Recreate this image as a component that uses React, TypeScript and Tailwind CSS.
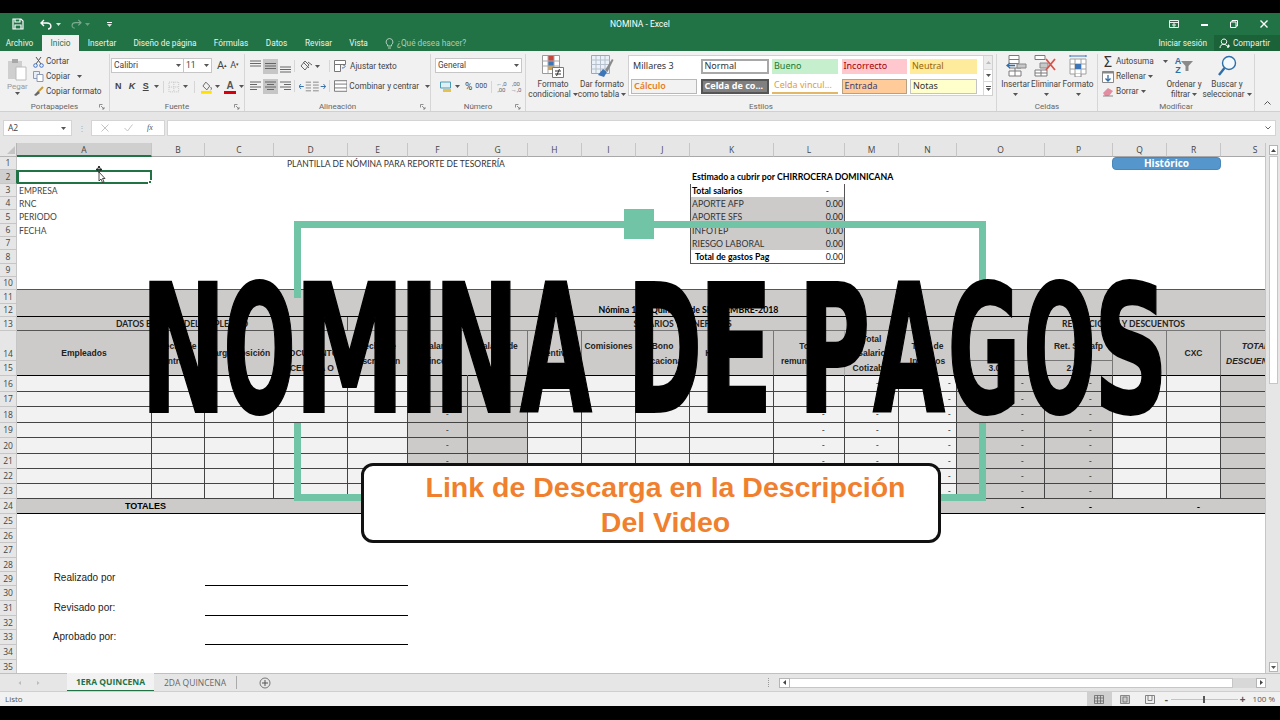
import type { ReactNode } from 'react';

const UI = "font-['Open_Sans',sans-serif]";
const RIB = "font-['Roboto',sans-serif]";
const CELL = "font-['Lato',sans-serif]";
const HEAD = "font-['Liberation_Sans',sans-serif]";

const COLS = ['A','B','C','D','E','F','G','H','I','J','K','L','M','N','O','P','Q','R','S'];
const COL_W = ['w-[135px]','w-[53px]','w-[69px]','w-[74px]','w-[60px]','w-[60px]','w-[60px]','w-[54px]','w-[54px]','w-[54px]','w-[84px]','w-[71px]','w-[54px]','w-[58px]','w-[88px]','w-[68px]','w-[54px]','w-[54px]','w-[69px]'];

const GREY = 'bg-[#cdcbca]';
const SOFT = 'bg-[#f2f2f2]';

// each letter of the thumbnail title: box width + gap, then horizontal squeeze
const TITLE: [string, string, string][] = [
  ['N', 'w-[67px]', 'scale-x-[0.576]'],
  ['O', 'w-[64px] ml-[11px]', 'scale-x-[0.48]'],
  ['M', 'w-[90px] ml-[13px]', 'scale-x-[0.63]'],
  ['I', 'w-[22px] ml-[13px]', 'scale-x-[0.65]'],
  ['N', 'w-[67px] ml-[13px]', 'scale-x-[0.576]'],
  ['A', 'w-[72px] ml-[10px]', 'scale-x-[0.525]'],
  ['D', 'w-[65px] ml-[40px]', 'scale-x-[0.505]'],
  ['E', 'w-[58px] ml-[10px]', 'scale-x-[0.62]'],
  ['P', 'w-[57px] ml-[41px]', 'scale-x-[0.555]'],
  ['A', 'w-[72px] ml-[10px]', 'scale-x-[0.525]'],
  ['G', 'w-[63px] ml-[8px]', 'scale-x-[0.5]'],
  ['O', 'w-[65px] ml-[11px]', 'scale-x-[0.48]'],
  ['S', 'w-[63px] ml-[8px]', 'scale-x-[0.585]'],
];

function Caret({ light }: { light?: boolean }) {
  return (
    <svg width="5" height="3" viewBox="0 0 5 3" className="shrink-0">
      <path d="M0 0h5L2.5 3z" fill={light ? '#d7e6dc' : '#555'} />
    </svg>
  );
}

function Launcher() {
  return (
    <svg width="6" height="6" viewBox="0 0 6 6" className="absolute right-[4px] top-[3px]">
      <path d="M.5 .5h3M.5 .5v3M2 2l3 3M5 3v2H3" stroke="#777" strokeWidth=".8" fill="none" />
    </svg>
  );
}

function Group({ w, label, launcher, children }: { w: string; label: string; launcher?: boolean; children: ReactNode }) {
  return (
    <div className={`${w} h-[57px] mt-[3px] border-r border-[#d6d6d6] flex flex-col shrink-0`}>
      <div className="h-[47px] flex">{children}</div>
      <div className="relative h-[10px] leading-[12px] text-center text-[8px] text-[#666]">
        {label}
        {launcher && <Launcher />}
      </div>
    </div>
  );
}

function Lines({ kind, active }: { kind: 'top' | 'mid' | 'bot' | 'left' | 'center' | 'right'; active?: boolean }) {
  const rows: Record<string, string> = {
    top: 'M2 2h11M2 4.5h11M2 7h11',
    mid: 'M2 4.5h11M2 7h11M2 9.5h11',
    bot: 'M2 8h11M2 10.5h11M2 13h11',
    left: 'M2 3h11M2 5.5h7M2 8h11M2 10.5h7',
    center: 'M2 3h11M4 5.5h7M2 8h11M4 10.5h7',
    right: 'M2 3h11M6 5.5h7M2 8h11M6 10.5h7',
  };
  return (
    <span className={`w-[15px] h-[15px] ${active ? 'bg-[#c6c6c6]' : ''}`}>
      <svg width="15" height="15" viewBox="0 0 15 15">
        <path d={rows[kind]} stroke="#666" strokeWidth="1" fill="none" />
      </svg>
    </span>
  );
}

function GalleryCell({ className, children }: { className: string; children: ReactNode }) {
  return <div className={`h-[15px] pl-[2px] text-[9px] overflow-hidden whitespace-nowrap ${className}`}>{children}</div>;
}

function BigButton({ w, icon, line1, line2 }: { w: string; icon: ReactNode; line1: string; line2: string }) {
  return (
    <div className={`${w} flex flex-col items-center text-[8.25px] leading-[10px] text-[#444] shrink-0`}>
      <div className="h-[24px] flex items-center justify-center">{icon}</div>
      <div className="mt-[1px] whitespace-nowrap">{line1}</div>
      <div className="flex items-center gap-[2px] whitespace-nowrap">{line2}<Caret /></div>
    </div>
  );
}

function CellsButton({ w, icon, label }: { w: string; icon: ReactNode; label: string }) {
  return (
    <div className={`${w} flex flex-col items-center text-[8.25px] leading-[10px] text-[#444] shrink-0`}>
      <div className="h-[24px] flex items-center justify-center">{icon}</div>
      <div className="mt-[1px]">{label}</div>
      <div className="h-[10px] flex items-center"><Caret /></div>
    </div>
  );
}

function TitleBar() {
  return (
    <div className="relative h-[22px] bg-[#217346] flex items-center text-white shrink-0">
      <svg width="12" height="12" viewBox="0 0 12 12" className="ml-[12px]">
        <path d="M1 1h8l2 2v8H1z M3 1v3h5V1 M3 11V7h6v4" stroke="#fff" strokeWidth="1.2" fill="none" />
      </svg>
      <svg width="12" height="11" viewBox="0 0 12 11" className="ml-[16px]">
        <path d="M4 1 1 4l3 3M1 4h6c5 0 5 6 1 6" stroke="#fff" strokeWidth="1.4" fill="none" />
      </svg>
      <span className="ml-[4px]"><Caret light /></span>
      <svg width="11" height="10" viewBox="0 0 12 11" className="ml-[10px] opacity-40">
        <path d="M8 1l3 3-3 3M11 4H5c-5 0-5 6-1 6" stroke="#fff" strokeWidth="1.2" fill="none" />
      </svg>
      <span className="ml-[3px] opacity-40"><Caret light /></span>
      <span className="ml-[17px] flex flex-col items-center gap-[1px]">
        <span className="w-[5px] h-[1px] bg-white" />
        <Caret light />
      </span>
      <div className={`absolute left-[610px] top-[5px] text-[8.5px] leading-[12px] ${RIB}`}>NOMINA - Excel</div>
      <div className="ml-auto flex items-center">
        <svg width="10" height="8" viewBox="0 0 10 8" className="mr-[22px]">
          <path d="M.5 .5h9v7h-9zM.5 2.5h9M5 3v4M3 5h4" stroke="#fff" strokeWidth=".9" fill="none" />
        </svg>
        <span className="w-[7px] h-[1.5px] bg-white mr-[22px] mt-[2px]" />
        <svg width="8" height="8" viewBox="0 0 8 8" className="mr-[22px]">
          <path d="M2 2V.5h5.5V6H6M.5 2H6v5.5H.5z" stroke="#fff" strokeWidth="1" fill="none" />
        </svg>
        <svg width="8" height="8" viewBox="0 0 8 8" className="mr-[12px]">
          <path d="M.5 .5l7 7M7.5 .5l-7 7" stroke="#fff" strokeWidth="1.4" />
        </svg>
      </div>
    </div>
  );
}

function Tabs() {
  const tabs: [string, string][] = [
    ['w-[46px]', 'Insertar'],
    ['w-[80px]', 'Diseño de página'],
    ['w-[52px]', 'Fórmulas'],
    ['w-[39px]', 'Datos'],
    ['w-[45px]', 'Revisar'],
    ['w-[35px]', 'Vista'],
  ];
  return (
    <div className={`h-[16px] bg-[#217346] flex items-center text-[8.25px] text-[#eaf3ed] shrink-0 ${RIB}`}>
      <div className="w-[39px] text-center">Archivo</div>
      <div className="ml-[3px] w-[37px] h-[16px] leading-[16px] bg-[#f1f1f1] text-center text-[#217346]">Inicio</div>
      {tabs.map(([w, t]) => (
        <div key={t} className={`${w} text-center`}>{t}</div>
      ))}
      <svg width="9" height="11" viewBox="0 0 9 11" className="ml-[9px]">
        <path d="M4.5 .5a3.5 3.5 0 0 0-2 6.3V8h4V6.800a3.500 3.500 0 0 0-2-6.300zM3 10h3" stroke="#bcd6c6" strokeWidth=".9" fill="none" />
      </svg>
      <div className="ml-[3px] text-[8.25px] text-[#a9cdb7]">¿Qué desea hacer?</div>
      <div className="ml-auto">Iniciar sesión</div>
      <div className="ml-[7px] w-[66px] h-[16px] bg-[#1b6239] flex items-center pl-[5px] gap-[3px]">
        <svg width="11" height="11" viewBox="0 0 11 11">
          <path d="M5 1a2.700 2.700 0 1 0 .01 0M1 10c0-5 7-5 8 0M8 8h3M9.500 6.500v3" stroke="#fff" strokeWidth="1" fill="none" />
        </svg>
        <span>Compartir</span>
      </div>
    </div>
  );
}

function Ribbon() {
  return (
    <div className={`h-[61px] bg-[#f1f1f1] border-b border-[#d0d0d0] flex text-[#444] shrink-0 ${RIB}`}>
      <Group w="w-[110px]" label="Portapapeles" launcher>
        <div className="w-[33px] pl-[7px] flex flex-col items-start text-[8px] text-[#999]">
          <svg width="20" height="24" viewBox="0 0 20 24" className="mt-[3px]">
            <path d="M1 4h14v18H1z" fill="#cfcfcf" />
            <path d="M5 2h6v4H5z" fill="#a8a8a8" />
            <path d="M9 10h10v13H9z" fill="#fff" stroke="#bbb" />
          </svg>
          <div className="mt-[1px] leading-[10px]">Pegar</div>
          <span className="ml-[8px]"><Caret /></span>
        </div>
        <div className="flex flex-col text-[8.25px]">
          <div className="h-[15px] flex items-center gap-[2px]">
            <svg width="11" height="12" viewBox="0 0 11 12"><path d="M3 1l5 7M8 1L3 8" stroke="#555" fill="none" /><circle cx="2.500" cy="9.500" r="1.800" stroke="#4472c4" fill="none" /><circle cx="8.500" cy="9.500" r="1.800" stroke="#4472c4" fill="none" /></svg>
            Cortar
          </div>
          <div className="h-[15px] flex items-center gap-[2px]">
            <svg width="11" height="11" viewBox="0 0 11 11"><path d="M.5 .5h6v7h-6z" fill="#e8eef8" stroke="#8a9ab5" /><path d="M4 3.500h6v7H4z" fill="#fff" stroke="#8a9ab5" /></svg>
            Copiar <span className="ml-[5px]"><Caret /></span>
          </div>
          <div className="h-[15px] flex items-center gap-[2px] whitespace-nowrap">
            <svg width="11" height="11" viewBox="0 0 11 11"><path d="M5 6l5-5" stroke="#c89a3c" strokeWidth="2" /><path d="M1 9l4-4 2 2-4 3z" fill="#666" /></svg>
            Copiar formato
          </div>
        </div>
      </Group>

      <Group w="w-[135px]" label="Fuente" launcher>
        <div className="mt-[4px] w-full">
          <div className="flex items-center">
            <div className="ml-[1px] w-[73px] h-[15px] bg-white border border-[#c6c6c6] flex items-center justify-between px-[2px] text-[8.5px]">Calibri<Caret /></div>
            <div className="w-[28px] h-[15px] bg-white border border-l-0 border-[#c6c6c6] flex items-center justify-between px-[2px] text-[8.5px]">11<Caret /></div>
            <span className="ml-[5px] text-[11px] leading-none">A<sup className="text-[5px]">▴</sup></span>
            <span className="ml-[3px] text-[9px] leading-none">A<sup className="text-[5px]">▾</sup></span>
          </div>
          <div className="mt-[6px] h-[15px] flex items-center pl-[3px] text-[9px]">
            <b className={`w-[11px] text-center ${HEAD}`}>N</b>
            <i className={`ml-[3px] w-[11px] text-center font-bold ${HEAD}`}>K</i>
            <span className={`ml-[3px] w-[11px] text-center font-bold underline ${HEAD}`}>S</span>
            <span className="ml-[3px]"><Caret /></span>
            <span className="ml-[4px] w-px h-[12px] bg-[#d6d6d6]" />
            <svg width="12" height="12" viewBox="0 0 12 12" className="ml-[4px]"><path d="M1 1h10v10H1zM6 1v10M1 6h10" stroke="#c4c4c4" strokeDasharray="1 1" fill="none" /></svg>
            <span className="ml-[3px]"><Caret /></span>
            <span className="ml-[6px] w-px h-[12px] bg-[#d6d6d6]" />
            <svg width="13" height="14" viewBox="0 0 13 14" className="ml-[5px]"><path d="M3 6l3-4 4 4-3 4z" fill="none" stroke="#666" /><path d="M11 7c1 1.500 1 2.500 0 3" stroke="#666" fill="none" /><path d="M1 11h11v3H1z" fill="#ffe100" /></svg>
            <span className="ml-[3px]"><Caret /></span>
            <span className="ml-[4px] relative w-[12px] h-[14px] text-center">
              <span className={`text-[10px] leading-[11px] font-bold block text-[#555] ${HEAD}`}>A</span>
              <span className="absolute left-0 bottom-0 w-[12px] h-[3px] bg-[#d8000c]" />
            </span>
            <span className="ml-[3px]"><Caret /></span>
          </div>
        </div>
      </Group>

      <Group w="w-[186px]" label="Alineación" launcher>
        <div className="mt-[4px] pl-[3px] w-full">
          <div className="h-[16px] flex items-center">
            <Lines kind="top" /><Lines kind="mid" active /><Lines kind="bot" />
            <span className="ml-[1px] w-px h-[12px] bg-[#d6d6d6]" />
            <svg width="14" height="12" viewBox="0 0 14 12" className="ml-[4px]"><path d="M2 6l4-5 4 4-4 5zM4 2l6 6M9 2l4 3" stroke="#666" fill="none" /></svg>
            <span className="ml-[2px]"><Caret /></span>
            <span className="ml-[9px] w-px h-[12px] bg-[#d6d6d6]" />
            <svg width="14" height="12" viewBox="0 0 14 12" className="ml-[4px]"><path d="M.5 .5h11v4H.5zM.5 4.500h6v7h-6z" fill="#fff" stroke="#777" /><path d="M8 8c4 0 4-3 1-3" stroke="#4472c4" fill="none" /></svg>
            <span className="ml-[2px] text-[8.25px] whitespace-nowrap">Ajustar texto</span>
          </div>
          <div className="mt-[4px] h-[16px] flex items-center">
            <Lines kind="left" /><Lines kind="center" active /><Lines kind="right" />
            <span className="ml-[1px] w-px h-[12px] bg-[#d6d6d6]" />
            <svg width="13" height="11" viewBox="0 0 13 11" className="ml-[4px]"><path d="M7 1h6M7 4h6M7 7h6M7 10h6" stroke="#888" /><path d="M5 5.500H0M2 3 0 5.500 2 8" stroke="#2f6ea8" fill="none" /></svg>
            <svg width="13" height="11" viewBox="0 0 13 11" className="ml-[2px]"><path d="M0 1h6M0 4h6M0 7h6M0 10h6" stroke="#888" /><path d="M8 5.500h5M11 3l2 2.500L11 8" stroke="#2f6ea8" fill="none" /></svg>
            <span className="ml-[3px] w-px h-[12px] bg-[#d6d6d6]" />
            <svg width="14" height="12" viewBox="0 0 14 12" className="ml-[4px]"><path d="M.5 .5h13v11H.5zM.5 4h13M.5 8h13" stroke="#777" fill="#fff" /></svg>
            <span className="ml-[2px] text-[8.25px] whitespace-nowrap">Combinar y centrar</span>
            <span className="ml-[6px]"><Caret /></span>
          </div>
        </div>
      </Group>

      <Group w="w-[95px]" label="Número" launcher>
        <div className="mt-[4px] pl-[4px] w-full">
          <div className="w-[87px] h-[15px] bg-white border border-[#c6c6c6] flex items-center justify-between px-[2px] text-[8.25px]">General<Caret /></div>
          <div className="mt-[6px] h-[15px] flex items-center text-[8.5px]">
            <svg width="13" height="12" viewBox="0 0 13 12" className="ml-[5px]"><path d="M.5 1h10v6H.5z" fill="#dff0f5" stroke="#4a9ab5" /><path d="M3 8h8v3H3z" fill="#e6c24a" /></svg>
            <span className="ml-[2px]"><Caret /></span>
            <span className="ml-[5px] text-[10px]">%</span>
            <span className="ml-[3px] text-[7px]">000</span>
            <span className="ml-[4px] w-px h-[12px] bg-[#d6d6d6]" />
            <span className="ml-[4px] text-[6px] leading-[6px] text-center text-[#667]">←,0<br />,00</span>
            <span className="ml-[4px] text-[6px] leading-[6px] text-center text-[#667]">,00<br />→,0</span>
          </div>
        </div>
      </Group>

      <Group w="w-[471px]" label="Estilos">
        <BigButton
          w="w-[52px] ml-[1px]"
          line1="Formato"
          line2="condicional"
          icon={
            <svg width="22" height="23" viewBox="0 0 22 23">
              <path d="M.5 .5h17v18H.5z" fill="#fff" stroke="#9a9a9a" />
              <path d="M6 1h6v5H6z" fill="#c9463d" />
              <path d="M6 6h6v5H6z" fill="#3d76b8" />
              <path d="M6 11h6v4H6z" fill="#d8a13c" />
              <path d="M.5 6h17M.5 11h17M6 1v17M12 1v17" stroke="#a8a8a8" fill="none" />
              <path d="M10.500 12.500h11v10h-11z" fill="#fff" stroke="#777" />
              <path d="M13 16h6M13 19h6M17.500 14l-3 7" stroke="#333" />
            </svg>
          }
        />
        <BigButton
          w="w-[46px]"
          line1="Dar formato"
          line2="como tabla"
          icon={
            <svg width="23" height="23" viewBox="0 0 23 23">
              <path d="M.5 .5h18v18H.5z" fill="#eaf1f8" stroke="#9aa8b8" />
              <path d="M.5 5h18M.5 9.500h18M.5 14h18M5 1v17M9.500 1v17M14 1v17" stroke="#b5c0cc" fill="none" />
              <path d="M7 20l5-6 4 3-3 5z" fill="#3d76b8" />
              <path d="M14 15l7-11 1.500 1-6 12z" fill="#8a8a8a" />
            </svg>
          }
        />
        <div className="ml-[3px] mt-[1px] w-[365px] h-[41px] bg-white border border-[#d0d0d0] flex text-[#333]">
          <div className="ml-[2px] mt-[3px] grid grid-cols-[66px_68px_66px_65px_67px] gap-x-[3.500px] gap-y-[3px] font-['Noto_Sans',sans-serif]">
            <GalleryCell className="bg-white leading-[13px]">Millares 3</GalleryCell>
            <GalleryCell className="bg-white border-2 border-[#a8a8a8] leading-[10px]">Normal</GalleryCell>
            <GalleryCell className="bg-[#c6efce] text-[#1d7a30] leading-[13px]">Bueno</GalleryCell>
            <GalleryCell className="bg-[#ffc7ce] text-[#9c0006] leading-[13px]">Incorrecto</GalleryCell>
            <GalleryCell className="bg-[#ffeb9c] text-[#9c6500] leading-[13px]">Neutral</GalleryCell>
            <GalleryCell className="bg-[#f2f2f2] border border-[#b8b8b8] text-[#e87d1e] font-semibold leading-[11px]">Cálculo</GalleryCell>
            <GalleryCell className="bg-[#808080] border-2 border-[#555] text-white font-bold leading-[10px]">Celda de co...</GalleryCell>
            <GalleryCell className="border-b-2 border-[#e2b868] text-[#e59a3c] leading-[12px]">Celda vincul...</GalleryCell>
            <GalleryCell className="bg-[#ffcc99] border border-[#b8a080] text-[#3f3f76] leading-[11px]">Entrada</GalleryCell>
            <GalleryCell className="bg-[#ffffcc] border border-[#c4c4c4] leading-[11px]">Notas</GalleryCell>
          </div>
          <div className="ml-auto w-[9px] flex flex-col border-l border-[#d8d8d8]">
            <div className="h-[13px] flex items-center justify-center bg-[#ececec]"><svg width="5" height="3" viewBox="0 0 5 3"><path d="M0 3h5L2.500 0z" fill="#bbb" /></svg></div>
            <div className="h-[13px] flex items-center justify-center border-y border-[#d8d8d8]"><Caret /></div>
            <div className="h-[13px] flex flex-col items-center justify-center gap-[1px]"><span className="w-[5px] h-px bg-[#555]" /><Caret /></div>
          </div>
        </div>
      </Group>

      <Group w="w-[101px]" label="Celdas">
        <span className="ml-[4px]" />
        <CellsButton
          w="w-[29px]"
          label="Insertar"
          icon={
            <svg width="24" height="22" viewBox="0 0 24 22">
              <path d="M5 .5h10v4H5zM5 4.500h10v4H5zM5 16h12v5H5zM5 13h12M11 13v8" stroke="#7a7a7a" fill="#fff" />
              <path d="M13 9h9v4h-9z" fill="#c8c8c8" stroke="#888" />
              <path d="M11 10.500H3M6 8l-3 2.500L6 13" stroke="#2f6ea8" strokeWidth="1.300" fill="none" />
            </svg>
          }
        />
        <CellsButton
          w="w-[32px]"
          label="Eliminar"
          icon={
            <svg width="24" height="22" viewBox="0 0 24 22">
              <path d="M1 .5h10v4H1zM1 15h12v6H1zM1 18h12M7 15v6" stroke="#7a7a7a" fill="#fff" />
              <path d="M6 8h8v5H6z" fill="#c8c8c8" stroke="#888" />
              <path d="M12 4l9 11M21 4l-9 11" stroke="#d9534a" strokeWidth="1.800" />
            </svg>
          }
        />
        <CellsButton
          w="w-[32px]"
          label="Formato"
          icon={
            <svg width="22" height="22" viewBox="0 0 22 22">
              <path d="M3 4h16v15H3zM3 9h16M3 14h16M8 4v15M14 4v15" stroke="#a0a0a0" fill="#fff" />
              <path d="M8 9h6v5H8z" fill="#3d76b8" />
              <path d="M3 1h16M3 0v2M19 0v2" stroke="#3d76b8" />
              <path d="M8 19v3h6v-3" stroke="#888" fill="#fff" />
            </svg>
          }
        />
      </Group>

      <Group w="w-[157px]" label="Modificar">
        <div className="w-[66px] pl-[4px] flex flex-col text-[8.25px] shrink-0">
          <div className="h-[15px] flex items-center gap-[2px]">
            <span className="w-[12px] shrink-0 text-[14px] leading-none text-[#333] text-center">Σ</span>Autosuma<span className="ml-[7px]"><Caret /></span>
          </div>
          <div className="h-[15px] flex items-center gap-[2px]">
            <svg width="12" height="12" viewBox="0 0 12 12" className="shrink-0"><path d="M.5 .5h11v11H.5z" fill="#fff" stroke="#888" /><path d="M.5 .5h11v2H.5z" fill="#888" /><path d="M6 4v6M3.500 7.500 6 10l2.500-2.500" stroke="#2f6ea8" strokeWidth="1.300" fill="none" /></svg>
            Rellenar<Caret />
          </div>
          <div className="h-[15px] flex items-center gap-[2px]">
            <svg width="12" height="11" viewBox="0 0 12 11" className="shrink-0"><path d="M1 7l5-5 5 3-4 5H3z" fill="#e08ea0" /><path d="M1 10h10" stroke="#888" /></svg>
            Borrar<Caret />
          </div>
        </div>
        <BigButton
          w="w-[40px]"
          line1="Ordenar y"
          line2="filtrar"
          icon={
            <span className="flex items-center">
              <span className={`text-[9px] leading-[9px] text-[#2f6ea8] font-bold text-center ${HEAD}`}>A<br />Z</span>
              <svg width="12" height="12" viewBox="0 0 12 12"><path d="M0 1h12L7.500 6v5h-3V6z" fill="#8a8a8a" /></svg>
            </span>
          }
        />
        <BigButton
          w="w-[46px]"
          line1="Buscar y"
          line2="seleccionar"
          icon={
            <svg width="20" height="22" viewBox="0 0 20 22">
              <circle cx="12" cy="8" r="6.500" fill="#f4f9fd" stroke="#2f6ea8" strokeWidth="1.400" />
              <path d="M7.500 13 2 20" stroke="#2f6ea8" strokeWidth="2.400" />
            </svg>
          }
        />
      </Group>
      <div className="flex-1 flex items-end justify-center pb-[6px]">
        <svg width="7" height="4" viewBox="0 0 7 4"><path d="M.5 3.500 3.500 .5l3 3" stroke="#555" fill="none" /></svg>
      </div>
    </div>
  );
}

function FormulaBar() {
  return (
    <div className={`h-[31px] bg-[#e6e6e6] flex items-center pl-[3px] pr-[4px] pt-[1px] shrink-0 ${UI}`}>
      <div className="w-[69px] h-[16px] bg-white border border-[#d4d4d4] flex items-center justify-between pl-[4px] pr-[5px] text-[8.500px] text-[#444]">A2<Caret /></div>
      <div className="w-[19px] text-center text-[8px] leading-[4px] text-[#aaa] tracking-tight">⋮</div>
      <div className="w-[74px] h-[16px] bg-white border border-[#d4d4d4] flex items-center text-[#bbb]">
        <svg width="8" height="8" viewBox="0 0 8 8" className="ml-[9px]"><path d="M.5 .5l7 7M7.500 .5l-7 7" stroke="#c4c4c4" /></svg>
        <svg width="9" height="8" viewBox="0 0 9 8" className="ml-[15px]"><path d="M.5 4l3 3 5-6.500" stroke="#c4c4c4" fill="none" /></svg>
        <i className="ml-[14px] text-[8px] text-[#555] font-['Liberation_Serif',serif]">fx</i>
      </div>
      <div className="ml-[2px] flex-1 h-[16px] bg-white border border-[#d4d4d4] flex items-center justify-end pr-[4px]">
        <svg width="6" height="4" viewBox="0 0 6 4"><path d="M.5 .5l2.500 2.500L5.500 .5" stroke="#666" fill="none" /></svg>
      </div>
    </div>
  );
}

function RowNo({ n, selected, bottom }: { n: number; selected?: boolean; bottom?: boolean }) {
  return (
    <td className={`p-0 text-center ${bottom ? 'align-bottom' : 'align-middle'} text-[8.500px] leading-[12px] border-b border-r border-[#c6c6c6] text-[#444] ${UI} ${selected ? 'bg-[#cfcfcf] border-r-[#217346]' : 'bg-[#e6e6e6]'}`}>
      {n}
    </td>
  );
}

function Hdr({ className, colSpan, rowSpan, children }: { className?: string; colSpan?: number; rowSpan?: number; children?: ReactNode }) {
  return (
    <td colSpan={colSpan} rowSpan={rowSpan} className={`p-0 pt-[1px] text-center align-middle whitespace-nowrap overflow-hidden text-[8.500px] leading-[14.25px] font-bold text-[#222] ${GREY} border-r border-b border-[#777] ${HEAD} ${className ?? ''}`}>
      {children}
    </td>
  );
}

function KV({ label, value, shaded, bold, indent, last }: { label: string; value: string; shaded?: boolean; bold?: boolean; indent?: boolean; last?: boolean }) {
  return (
    <>
      <td className={`p-0 pt-[1px] text-[8.75px] leading-none whitespace-nowrap border-l border-[#555] ${shaded ? GREY : 'bg-white'} ${bold ? 'font-bold text-black' : 'text-[#333]'} ${indent ? 'pl-[4px]' : 'pl-[1px]'} ${last ? 'border-b' : ''}`}>
        {label}
      </td>
      <td className={`p-0 pt-[1px] text-[8.75px] leading-none text-right pr-[1px] border-r border-[#555] text-[#222] ${shaded ? GREY : 'bg-white'} ${last ? 'border-b' : ''}`}>
        {value === '-' ? <span className="pr-[14px]">-</span> : value}
      </td>
    </>
  );
}

function Sheet() {
  const greyCols = ['F', 'G', 'O', 'P', 'S'];
  const dashes: Record<string, string> = { F: 'pr-[18px]', L: 'pr-[19px]', M: 'pr-[19px]', N: 'pr-[5px]', O: 'pr-[20px]', P: 'pr-[20px]' };
  const body: [number, string][] = [
    [16, 'h-[16px]'], [17, 'h-[15px]'], [18, 'h-[16px]'], [19, 'h-[15px]'],
    [20, 'h-[16px]'], [21, 'h-[15px]'], [22, 'h-[15px]'], [23, 'h-[15px]'],
  ];
  const tail: [number, string][] = [
    [25, 'h-[15px]'], [26, 'h-[14px]'], [27, 'h-[15px]'], [28, 'h-[14px]'], [29, 'h-[14px]'], [30, 'h-[15px]'],
    [31, 'h-[15px]'], [32, 'h-[14px]'], [33, 'h-[15px]'], [34, 'h-[15px]'], [35, 'h-[14px]'],
  ];
  const signers: Record<number, string> = { 29: 'Realizado por', 31: 'Revisado por:', 33: 'Aprobado por:' };

  return (
    <div className="flex-1 h-[530px] overflow-hidden bg-white">
      <table className={`table-fixed border-separate border-spacing-0 w-[1290px] ${CELL}`}>
        <colgroup>
          <col className="w-[17px]" />
          {COL_W.map((w, i) => <col key={COLS[i]} className={w} />)}
        </colgroup>
        <thead>
          <tr className="h-[14px]">
            <th className="p-0 leading-none bg-[#e6e6e6] border-b border-r border-[#b5b5b5]">
              <svg width="10" height="10" viewBox="0 0 10 10" className="block ml-[6px]"><path d="M9 1v8H1z" fill="#c4c4c4" /></svg>
            </th>
            {COLS.map((c) => (
              <th key={c} className={`p-0 text-center font-normal text-[8.500px] leading-[11px] text-[#444] border-r border-[#c6c6c6] border-b ${UI} ${c === 'A' ? 'bg-[#cfcfcf] border-b-[#217346] border-b-2' : 'bg-[#e6e6e6] border-b-[#a8a8a8]'}`}>{c}</th>
            ))}
          </tr>
        </thead>
        <tbody>
          <tr className="h-[13px]">
            <RowNo n={1} />
            <td colSpan={3} className="p-0" />
            <td colSpan={5} className="p-0 pt-[1px] pl-[13px] text-[8.5px] leading-none whitespace-nowrap text-[#333]">PLANTILLA DE NÓMINA PARA REPORTE DE TESORERÍA</td>
            <td colSpan={11} className="p-0" />
          </tr>
          <tr className="h-[14px]">
            <RowNo n={2} selected />
            <td className="relative p-0 border-2 border-[#217346]">
              <span className="absolute -right-[2px] -bottom-[2px] w-[4px] h-[4px] bg-[#217346] border border-white" />
            </td>
            <td colSpan={9} className="p-0" />
            <td colSpan={9} className="p-0 pt-[1px] pl-[2px] text-[8.75px] leading-none font-bold whitespace-nowrap text-black">Estimado a cubrir por CHIRROCERA DOMINICANA</td>
          </tr>
          {[
            { n: 3, h: 'h-[13px]', left: 'EMPRESA', label: 'Total salarios', value: '-', bold: true },
            { n: 4, h: 'h-[13px]', left: 'RNC', label: 'APORTE AFP', value: '0.00', shaded: true },
            { n: 5, h: 'h-[14px]', left: 'PERIODO', label: 'APORTE SFS', value: '0.00', shaded: true },
            { n: 6, h: 'h-[13px]', left: 'FECHA', label: 'INFOTEP', value: '0.00', shaded: true },
            { n: 7, h: 'h-[13px]', left: '', label: 'RIESGO LABORAL', value: '0.00', shaded: true },
            { n: 8, h: 'h-[14px]', left: '', label: 'Total de gastos Pag', value: '0.00', bold: true, indent: true, last: true },
          ].map((r) => (
            <tr key={r.n} className={r.h}>
              <RowNo n={r.n} />
              <td className="p-0 pt-[1px] pl-[2px] text-[8.5px] leading-none text-[#444]">{r.left}</td>
              <td colSpan={9} className="p-0" />
              <KV label={r.label} value={r.value} shaded={r.shaded} bold={r.bold} indent={r.indent} last={r.last} />
              <td colSpan={7} className="p-0" />
            </tr>
          ))}
          <tr className="h-[13px]"><RowNo n={9} /><td colSpan={19} className="p-0" /></tr>
          <tr className="h-[13px]"><RowNo n={10} /><td colSpan={19} className="p-0 border-b border-[#555]" /></tr>

          <tr className="h-[14px]"><RowNo n={11} /><td colSpan={19} className={`p-0 ${GREY}`} /></tr>
          <tr className="h-[13px]">
            <RowNo n={12} />
            <td colSpan={19} className={`p-0 pl-[70px] text-center text-[8.75px] leading-none font-bold text-black border-b border-black ${GREY}`}>Nómina 1era Quincena de SEPTIEMBRE-2018</td>
          </tr>
          <tr className="h-[14px]">
            <RowNo n={13} />
            <td colSpan={4} className={`p-0 pt-[1px] text-center text-[8.5px] leading-none font-bold text-[#222] border-b border-r border-[#555] ${GREY}`}>DATOS BÁSICOS DEL EMPLEADO</td>
            <td className={`p-0 border-b border-[#777] ${GREY}`} />
            <td colSpan={9} className={`p-0 pt-[1px] text-center text-[8.5px] leading-none font-bold text-[#222] border-b border-[#777] ${GREY}`}>SALARIOS Y BENEFICIOS</td>
            <td colSpan={5} className={`p-0 pt-[1px] text-center text-[8.5px] leading-none font-bold text-[#222] border-b border-[#777] ${GREY}`}>RETENCIONES Y DESCUENTOS</td>
          </tr>
          <tr className="h-[30px]">
            <RowNo n={14} bottom />
            <Hdr rowSpan={2} className="border-b-black border-r-transparent">Empleados</Hdr>
            <Hdr rowSpan={2} className="border-b-black border-r-transparent">Fecha de<br />Entrada</Hdr>
            <Hdr rowSpan={2} className="border-b-black border-r-transparent">Cargo/Posición</Hdr>
            <Hdr rowSpan={2} className="border-b-black border-r-transparent">No.<br />DOCUMENTO<br />(CEDULA O</Hdr>
            <Hdr rowSpan={2} className="border-b-black">Fecha de<br />Inscripción</Hdr>
            <Hdr rowSpan={2} className="border-b-black border-r-transparent">Salario<br />Quincenal</Hdr>
            <Hdr rowSpan={2} className="border-b-black">Salario de<br />&nbsp;</Hdr>
            <Hdr rowSpan={2} className="border-b-black">Incentivos</Hdr>
            <Hdr rowSpan={2} className="border-b-black border-r-transparent">Comisiones<br />&nbsp;</Hdr>
            <Hdr rowSpan={2} className="border-b-black border-r-transparent">Bono<br />Vacacional</Hdr>
            <Hdr rowSpan={2} className="border-b-black">Horas Extras</Hdr>
            <Hdr rowSpan={2} className="border-b-black border-r-[#aaa]">Total<br />remuneración</Hdr>
            <Hdr rowSpan={2} className="border-b-black border-r-transparent">Total<br />Salario<br />Cotizable</Hdr>
            <Hdr rowSpan={2} className="border-b-black">Total de<br />Ingresos</Hdr>
            <Hdr>SFS</Hdr>
            <Hdr>Ret. Seg.afp</Hdr>
            <Hdr rowSpan={2} className="border-b-black" />
            <Hdr rowSpan={2} className="border-b-black">CXC</Hdr>
            <Hdr rowSpan={2} className="border-b-black border-r-0 italic">TOTAL<br />DESCUENTOS</Hdr>
          </tr>
          <tr className="h-[15px]">
            <RowNo n={15} />
            <Hdr className="border-b-black !pt-0 !leading-[13px]">3.04%</Hdr>
            <Hdr className="border-b-black !pt-0 !leading-[13px]">2.87%</Hdr>
          </tr>
          {body.map(([n, h]) => (
            <tr key={n} className={h}>
              <RowNo n={n} />
              {COLS.map((c) => (
                <td
                  key={c}
                  className={`p-0 text-right text-[8.5px] leading-none text-[#333] border-b border-[#444] ${c === 'S' ? '' : 'border-r'} ${greyCols.includes(c) ? GREY : SOFT} ${dashes[c] ?? ''}`}
                >
                  {dashes[c] ? '-' : ''}
                </td>
              ))}
            </tr>
          ))}
          <tr className="h-[15px]">
            <RowNo n={24} />
            <td colSpan={3} className={`p-0 text-center text-[9px] leading-none font-bold text-black border-b border-black ${GREY} ${HEAD}`}>TOTALES</td>
            <td colSpan={11} className={`p-0 border-b border-black ${GREY}`} />
            <td className={`p-0 pr-[21px] text-right text-[9px] leading-none font-bold border-b border-black ${GREY}`}>-</td>
            <td className={`p-0 pr-[21px] text-right text-[9px] leading-none font-bold border-b border-black ${GREY}`}>-</td>
            <td className={`p-0 border-b border-black ${GREY}`} />
            <td className={`p-0 pr-[21px] text-right text-[9px] leading-none font-bold border-b border-black ${GREY}`}>-</td>
            <td className={`p-0 border-b border-black ${GREY}`} />
          </tr>
          {tail.map(([n, h]) => (
            <tr key={n} className={h}>
              <RowNo n={n} />
              <td className={`p-0 pb-[2px] text-center text-[10px] leading-none text-[#222] ${HEAD}`}>{signers[n] ?? ''}</td>
              <td className="p-0" />
              <td colSpan={3} className={`p-0 ${signers[n] ? 'border-b border-black' : ''}`} />
              <td colSpan={14} className="p-0" />
            </tr>
          ))}
        </tbody>
      </table>
    </div>
  );
}

function VScroll() {
  return (
    <div className="w-[15px] h-[530px] bg-[#e6e6e6] border-l border-[#c6c6c6] flex flex-col items-center shrink-0">
      <div className="mt-[2px] w-[9px] h-[10px] bg-white border border-[#b5b5b5] flex items-center justify-center">
        <svg width="5" height="3" viewBox="0 0 5 3"><path d="M0 3h5L2.500 0z" fill="#444" /></svg>
      </div>
      <div className="mt-[1px] w-[9px] h-[228px] bg-white border border-[#c6c6c6]" />
      <div className="mt-auto mb-[1px] w-[9px] h-[10px] bg-white border border-[#b5b5b5] flex items-center justify-center"><Caret /></div>
    </div>
  );
}

function SheetTabs() {
  return (
    <div className={`h-[19px] bg-[#e6e6e6] border-b border-[#cfcfcf] border-t border-t-[#c0c0c0] flex items-stretch text-[8.500px] shrink-0 ${UI}`}>
      <svg width="67" height="18" viewBox="0 0 67 18" className="shrink-0">
        <path d="M21 7 18.500 9 21 11zM37 7l2.500 2L37 11z" fill="#bbb" />
      </svg>
      <div className="w-[87px] -mt-px bg-[#f2f2f2] border-b border-[#217346] text-center font-bold leading-[17px] text-[#217346]">1ERA QUINCENA</div>
      <div className="w-[82px] text-center leading-[17px] text-[#666]">2DA QUINCENA</div>
      <span className="mt-[2px] w-px h-[13px] bg-[#aaa]" />
      <svg width="12" height="12" viewBox="0 0 12 12" className="ml-[22px] mt-[3px]">
        <circle cx="6" cy="6" r="5" stroke="#777" fill="none" />
        <path d="M3 6h6M6 3v6" stroke="#555" />
      </svg>
      <div className="ml-auto flex items-center pr-[14px]">
        <span className="w-[2px] h-[9px] border-l border-dotted border-[#999] mr-[9px]" />
        <div className="w-[487px] h-[10px] bg-[#d8d8d8] flex">
          <div className="w-[11px] bg-white border border-[#b5b5b5] flex items-center justify-center"><svg width="3" height="5" viewBox="0 0 3 5"><path d="M3 0v5L0 2.500z" fill="#444" /></svg></div>
          <div className="w-[443px] bg-white border-y border-r border-[#c6c6c6]" />
          <div className="ml-auto w-[10px] bg-white border border-[#b5b5b5] flex items-center justify-center"><svg width="3" height="5" viewBox="0 0 3 5"><path d="M0 0v5l3-2.500z" fill="#444" /></svg></div>
        </div>
      </div>
    </div>
  );
}

function StatusBar() {
  return (
    <div className={`h-[14px] bg-[#f1f1f1] flex items-center text-[8px] text-[#555] shrink-0 ${UI}`}>
      <span className="ml-[5px]">Listo</span>
      <div className="ml-auto w-[25px] h-[14px] bg-[#d0d0d0] flex items-center justify-center">
        <svg width="10" height="9" viewBox="0 0 10 9"><path d="M.5 .5h9v8h-9zM.5 3h9M.5 6h9M3.500 .5v8M6.500 .5v8" stroke="#666" fill="none" strokeWidth=".8" /></svg>
      </div>
      <svg width="10" height="9" viewBox="0 0 10 9" className="ml-[8px]"><path d="M.5 .5h9v8h-9z" fill="#ccc" stroke="#888" /><path d="M3 2h4v5H3z" fill="none" stroke="#666" strokeWidth=".7" /></svg>
      <svg width="10" height="9" viewBox="0 0 10 9" className="ml-[15px]"><path d="M.5 .5h9v8h-9zM3 .5v5h4v-5" stroke="#777" fill="none" strokeWidth=".9" /></svg>
      <span className="ml-[10px] text-[10px] leading-none font-bold">-</span>
      <div className="relative ml-[3px] w-[67px] h-px bg-[#c4c4c4]">
        <span className="absolute left-[32px] -top-[3px] w-[2px] h-[7px] bg-[#555]" />
      </div>
      <span className="ml-[2px] text-[10px] leading-none font-bold">+</span>
      <span className="ml-[7px] mr-[5px] whitespace-nowrap">100 %</span>
    </div>
  );
}

function Cursor() {
  return (
    <svg width="14" height="18" viewBox="0 0 14 18" className="absolute left-[93px] top-[165px]">
      <path d="M6 1v7M3 4.500h6M6 1 5 2.500h2zM3 4.500 4.500 3.500v2zM9 4.500 7.500 3.500v2z" stroke="#222" strokeWidth=".8" fill="#222" />
      <path d="M6 7v9l2-2 1.500 3.500 1.500-.7L9.500 13.500H12z" fill="#fff" stroke="#222" strokeWidth=".8" />
    </svg>
  );
}

export default function App() {
  return (
    <div className="relative w-[1280px] h-[720px] overflow-hidden bg-black flex flex-col pt-[13px] pb-[14px]">
      <TitleBar />
      <Tabs />
      <Ribbon />
      <FormulaBar />
      <div className="flex shrink-0">
        <Sheet />
        <VScroll />
      </div>
      <SheetTabs />
      <StatusBar />

      <Cursor />

      {/* Histórico button floating over the sheet */}
      <div className="absolute left-[1112px] top-[157px] w-[109px] h-[13px] rounded-[4px] bg-[#5596cc] border border-[#4a86b8] text-center text-[10px] leading-[11px] font-bold text-white font-['Open_Sans',sans-serif]">
        Histórico
      </div>

      {/* thumbnail overlay */}
      <div className="absolute left-[294px] top-[221px] w-[692px] h-[7px] bg-[#72c4a6]" />
      <div className="absolute left-[294px] top-[221px] w-[7px] h-[77px] bg-[#72c4a6]" />
      <div className="absolute left-[979px] top-[221px] w-[7px] h-[70px] bg-[#72c4a6]" />
      <div className="absolute left-[294px] top-[423px] w-[7px] h-[78px] bg-[#72c4a6]" />
      <div className="absolute left-[979px] top-[423px] w-[7px] h-[78px] bg-[#72c4a6]" />
      <div className="absolute left-[294px] top-[494px] w-[692px] h-[7px] bg-[#72c4a6]" />
      <div className="absolute left-[624px] top-[209px] w-[30px] h-[30px] bg-[#72c4a6]" />

      <div className="absolute left-[150px] top-[262px] flex text-[178px] leading-none font-bold text-black [-webkit-text-stroke:2px_black] font-['DejaVu_Sans',sans-serif]">
        {TITLE.map(([ch, box, squeeze], i) => (
          <div key={i} className={`${box} flex justify-center`}>
            <span className={`shrink-0 ${squeeze}`}>{ch}</span>
          </div>
        ))}
      </div>

      <div className="absolute left-[361px] top-[463px] w-[580px] h-[80px] bg-white border-[3px] border-[#111] rounded-[12px] pl-[29px] pt-[4px] text-center text-[28.5px] leading-[35px] font-bold text-[#f07f2e] font-['Liberation_Sans',sans-serif]">
        Link de Descarga en la Descripción
        <br />
        Del Video
      </div>
    </div>
  );
}
